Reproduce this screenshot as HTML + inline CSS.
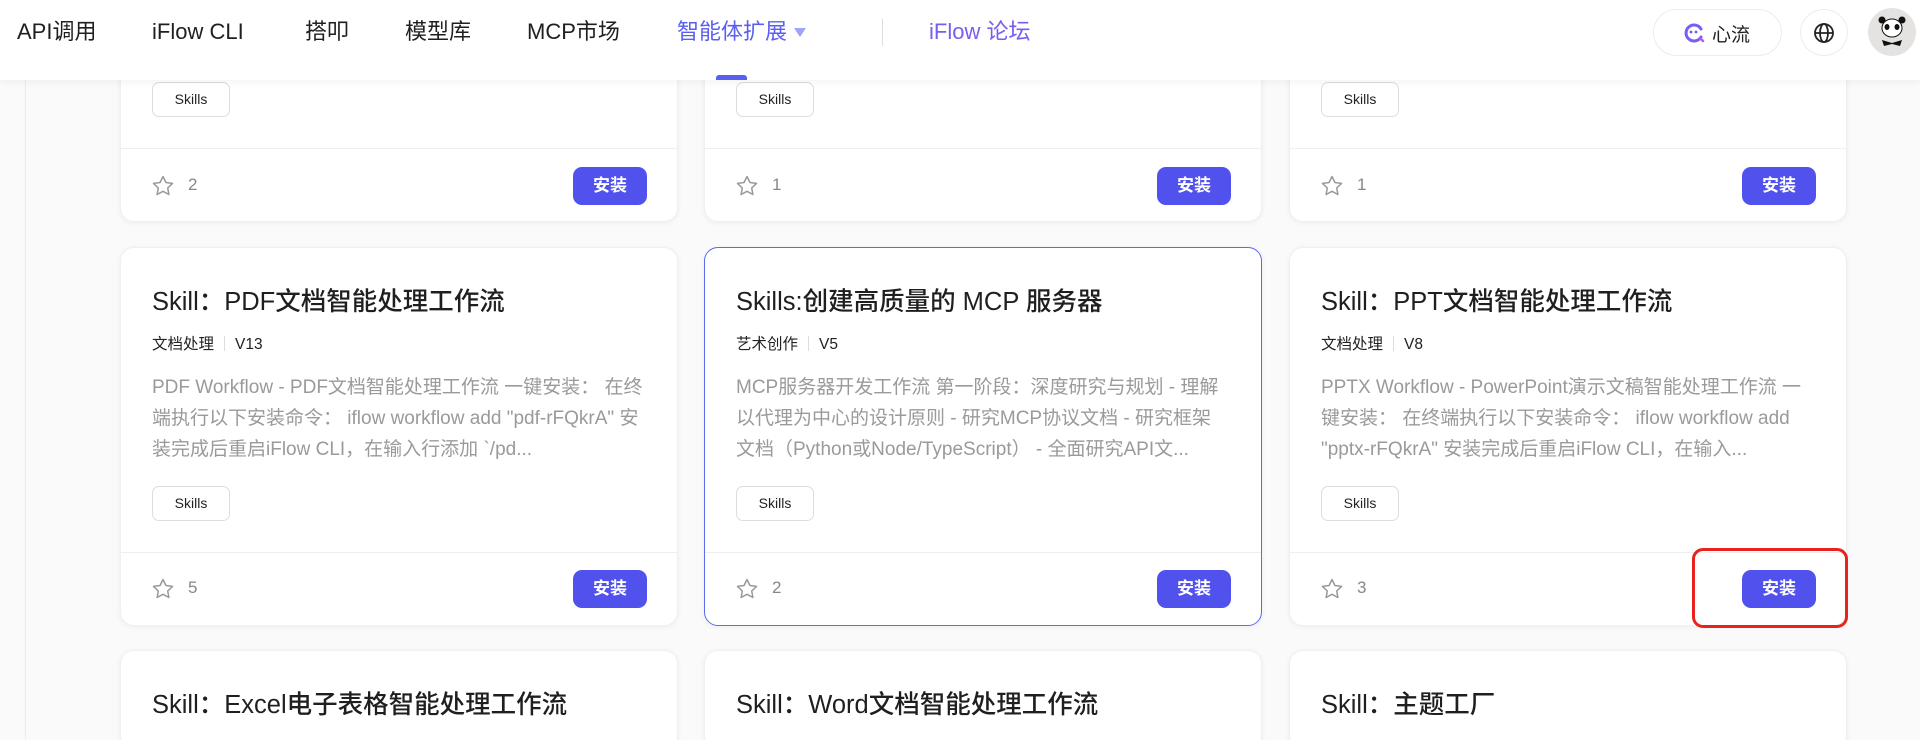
<!DOCTYPE html>
<html style="width:1920px;height:740px;overflow:hidden"><head><meta charset="utf-8"><style>
*{margin:0;padding:0;box-sizing:border-box}
body{width:1920px;height:740px;overflow:hidden;background:#fafafa;font-family:"Liberation Sans","Noto Sans CJK SC",sans-serif;position:relative;color:#1f1f1f}
.vl{position:absolute;left:25px;top:80px;width:1px;height:660px;background:#ececec}
.hdr{position:absolute;left:0;top:0;width:1920px;height:80px;background:#fff;box-shadow:0 2px 8px rgba(0,0,0,.05);z-index:5}
.nav{position:absolute;top:18px;font-size:22px;color:#1f1f1f;line-height:28px}
.card{position:absolute;width:558px;background:#fff;border-radius:14px;box-shadow:0 1px 6px rgba(0,0,0,.06);border:1px solid #f0f0f0;overflow:hidden}
.card.sel{border:1px solid #5a6cf0}
.t{position:absolute;left:31px;font-size:25.5px;color:#1f1f1f;white-space:nowrap;font-weight:500}
.m{position:absolute;left:31px;font-size:15.5px;color:#222;white-space:nowrap}
.m i{display:inline-block;width:1px;height:15px;background:#ddd;margin:0 10px;vertical-align:-2px}
.d{position:absolute;left:31px;width:492px;font-size:19px;line-height:31px;color:#9a9a9a;height:93px;overflow:hidden}
.tag{position:absolute;left:31px;width:78px;height:35px;border:1.5px solid #ddd;border-radius:7px;font-size:14px;line-height:32px;text-align:center;color:#222}
.ft{position:absolute;left:0;width:100%;border-top:1px solid #efefef}
.star{position:absolute;left:30px;width:24px;height:24px}
.cnt{position:absolute;left:67px;font-size:17px;color:#888}
.btn{position:absolute;right:30px;width:74px;height:38px;border-radius:9px;background:#5151ee;color:#fff;font-size:17px;font-weight:bold;text-align:center;line-height:38px}
</style></head><body>
<div class="vl"></div>
<div class="hdr">
<div class="nav" style="left:17px">API调用</div>
<div class="nav" style="left:152px">iFlow CLI</div>
<div class="nav" style="left:305px">搭叩</div>
<div class="nav" style="left:405px">模型库</div>
<div class="nav" style="left:527px">MCP市场</div>
<div class="nav" style="left:677px;color:#5b5ff0">智能体扩展</div>
<div style="position:absolute;left:794px;top:28px;width:0;height:0;border-left:6px solid transparent;border-right:6px solid transparent;border-top:9px solid #9fa4f5"></div>
<div style="position:absolute;left:882px;top:19px;width:1px;height:27px;background:#ddd"></div>
<div class="nav" style="left:929px;color:#7a5cf0">iFlow 论坛</div>
<div style="position:absolute;left:716px;top:75px;width:31px;height:5px;border-radius:3px 3px 0 0;background:#5b5ff0"></div>
<div style="position:absolute;left:1653px;top:9px;width:129px;height:47px;border:1.5px solid #ececec;border-radius:24px;background:#fff">
<svg style="position:absolute;left:29px;top:12px" width="22" height="22" viewBox="0 0 22 22"><path d="M18 7A8 8 0 1 0 18 15" fill="none" stroke="#7b5cf5" stroke-width="3" stroke-linecap="round"/><circle cx="8" cy="10" r="1.4" fill="#5b5ff0"/><circle cx="13" cy="10" r="1.4" fill="#5b5ff0"/><path d="M17 16l3 3" stroke="#b05cf0" stroke-width="2.5" stroke-linecap="round"/></svg>
<span style="position:absolute;left:58px;top:10px;font-size:19px;color:#222">心流</span></div>
<div style="position:absolute;left:1800px;top:9px;width:48px;height:47px;border:1.5px solid #ececec;border-radius:50%;background:#fff">
<svg style="position:absolute;left:12px;top:12px" width="22" height="22" viewBox="0 0 22 22" fill="none" stroke="#222" stroke-width="1.8"><circle cx="11" cy="11" r="9"/><ellipse cx="11" cy="11" rx="4" ry="9"/><path d="M2 11h18"/></svg></div>
<div style="position:absolute;left:1868px;top:8px;width:48px;height:48px;border-radius:50%;background:#e4e3e1">
<svg style="position:absolute;left:9px;top:8px" width="30" height="32" viewBox="0 0 30 32"><circle cx="5" cy="4" r="3.5" fill="#111"/><circle cx="25" cy="4" r="3.5" fill="#111"/><ellipse cx="15" cy="12" rx="10" ry="9" fill="#fff" stroke="#111" stroke-width="1"/><ellipse cx="10" cy="11" rx="2.5" ry="3" fill="#111"/><ellipse cx="20" cy="11" rx="2.5" ry="3" fill="#111"/><path d="M5 24l10 3 10-3-2 6-8-2-8 2z" fill="#111"/></svg></div>
</div>

<!-- row 1 -->
<div class="card" style="left:120px;top:40px;height:182px"><div class="tag" style="top:41px">Skills</div><div class="ft" style="top:107px"></div><svg class="star" style="top:133px" viewBox="0 0 24 24"><path d="M12 2.5l2.9 6 6.6.9-4.8 4.6 1.2 6.5L12 17.3l-5.9 3.2 1.2-6.5L2.5 9.4l6.6-.9z" fill="none" stroke="#999" stroke-width="1.5" stroke-linejoin="round"/></svg><div class="cnt" style="top:134px">2</div><div class="btn" style="top:126px">安装</div></div>
<div class="card" style="left:704px;top:40px;height:182px"><div class="tag" style="top:41px">Skills</div><div class="ft" style="top:107px"></div><svg class="star" style="top:133px" viewBox="0 0 24 24"><path d="M12 2.5l2.9 6 6.6.9-4.8 4.6 1.2 6.5L12 17.3l-5.9 3.2 1.2-6.5L2.5 9.4l6.6-.9z" fill="none" stroke="#999" stroke-width="1.5" stroke-linejoin="round"/></svg><div class="cnt" style="top:134px">1</div><div class="btn" style="top:126px">安装</div></div>
<div class="card" style="left:1289px;top:40px;height:182px"><div class="tag" style="top:41px">Skills</div><div class="ft" style="top:107px"></div><svg class="star" style="top:133px" viewBox="0 0 24 24"><path d="M12 2.5l2.9 6 6.6.9-4.8 4.6 1.2 6.5L12 17.3l-5.9 3.2 1.2-6.5L2.5 9.4l6.6-.9z" fill="none" stroke="#999" stroke-width="1.5" stroke-linejoin="round"/></svg><div class="cnt" style="top:134px">1</div><div class="btn" style="top:126px">安装</div></div>

<!-- row 2 -->
<div class="card" style="left:120px;top:247px;height:379px">
<div class="t" style="top:33px">Skill：PDF文档智能处理工作流</div>
<div class="m" style="top:84px">文档处理<i></i>V13</div>
<div class="d" style="top:124px">PDF Workflow - PDF文档智能处理工作流 一键安装： 在终端执行以下安装命令： iflow workflow add "pdf-rFQkrA" 安装完成后重启iFlow CLI，在输入行添加 `/pd...</div>
<div class="tag" style="top:238px">Skills</div><div class="ft" style="top:304px"></div>
<svg class="star" style="top:329px" viewBox="0 0 24 24"><path d="M12 2.5l2.9 6 6.6.9-4.8 4.6 1.2 6.5L12 17.3l-5.9 3.2 1.2-6.5L2.5 9.4l6.6-.9z" fill="none" stroke="#999" stroke-width="1.5" stroke-linejoin="round"/></svg><div class="cnt" style="top:330px">5</div><div class="btn" style="top:322px">安装</div></div>
<div class="card sel" style="left:704px;top:247px;height:379px">
<div class="t" style="top:33px">Skills:创建高质量的 MCP 服务器</div>
<div class="m" style="top:84px">艺术创作<i></i>V5</div>
<div class="d" style="top:124px">MCP服务器开发工作流 第一阶段：深度研究与规划 - 理解以代理为中心的设计原则 - 研究MCP协议文档 - 研究框架文档（Python或Node/TypeScript） - 全面研究API文...</div>
<div class="tag" style="top:238px">Skills</div><div class="ft" style="top:304px"></div>
<svg class="star" style="top:329px" viewBox="0 0 24 24"><path d="M12 2.5l2.9 6 6.6.9-4.8 4.6 1.2 6.5L12 17.3l-5.9 3.2 1.2-6.5L2.5 9.4l6.6-.9z" fill="none" stroke="#999" stroke-width="1.5" stroke-linejoin="round"/></svg><div class="cnt" style="top:330px">2</div><div class="btn" style="top:322px">安装</div></div>
<div class="card" style="left:1289px;top:247px;height:379px">
<div class="t" style="top:33px">Skill：PPT文档智能处理工作流</div>
<div class="m" style="top:84px">文档处理<i></i>V8</div>
<div class="d" style="top:124px">PPTX Workflow - PowerPoint演示文稿智能处理工作流 一键安装： 在终端执行以下安装命令： iflow workflow add "pptx-rFQkrA" 安装完成后重启iFlow CLI，在输入...</div>
<div class="tag" style="top:238px">Skills</div><div class="ft" style="top:304px"></div>
<svg class="star" style="top:329px" viewBox="0 0 24 24"><path d="M12 2.5l2.9 6 6.6.9-4.8 4.6 1.2 6.5L12 17.3l-5.9 3.2 1.2-6.5L2.5 9.4l6.6-.9z" fill="none" stroke="#999" stroke-width="1.5" stroke-linejoin="round"/></svg><div class="cnt" style="top:330px">3</div><div class="btn" style="top:322px">安装</div></div>
<div style="position:absolute;left:1692px;top:548px;width:156px;height:80px;border:3px solid #e8231f;border-radius:11px"></div>

<!-- row 3 -->
<div class="card" style="left:120px;top:650px;height:100px"><div class="t" style="top:33px">Skill：Excel电子表格智能处理工作流</div></div>
<div class="card" style="left:704px;top:650px;height:100px"><div class="t" style="top:33px">Skill：Word文档智能处理工作流</div></div>
<div class="card" style="left:1289px;top:650px;height:100px"><div class="t" style="top:33px">Skill：主题工厂</div></div>
</body></html>
